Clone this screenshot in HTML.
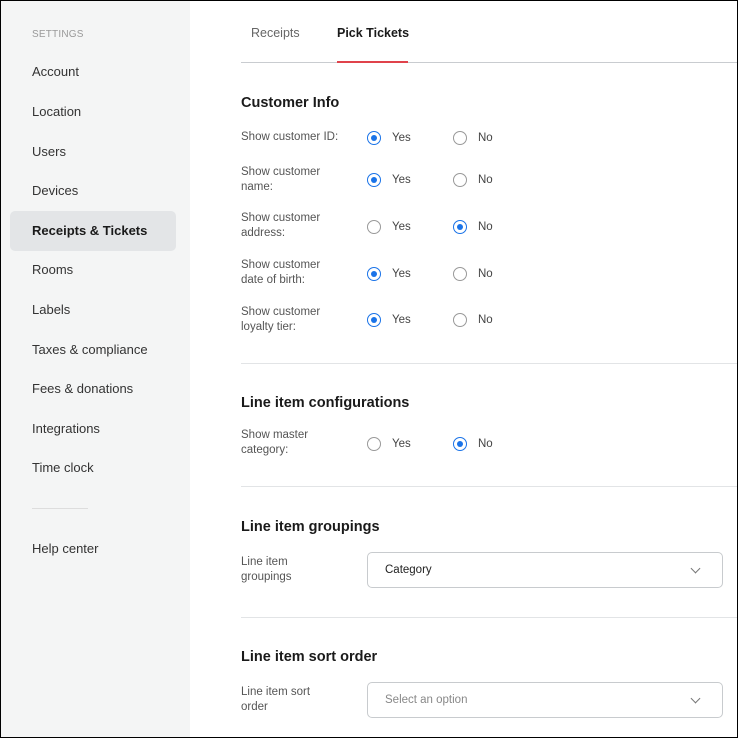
<!DOCTYPE html>
<html><head><style>
*{margin:0;padding:0;box-sizing:border-box}
body{width:738px;height:738px;position:relative;overflow:hidden;font-family:"Liberation Sans",sans-serif;background:#fff;color:#1a1a1a}
.frame{position:absolute;left:0;top:0;width:738px;height:738px;border:1px solid #000;z-index:10;pointer-events:none}
.side{position:absolute;left:0;top:0;width:190px;height:738px;background:#f4f5f5}
.a{position:absolute;white-space:nowrap}
.nav{left:32px;font-size:13px;color:#333;line-height:16px}
.sel{position:absolute;left:10px;top:211px;width:166px;height:40px;background:#e3e5e7;border-radius:5px}
.lbl{left:241px;font-size:11.5px;color:#555;line-height:15px}
.h{left:241px;font-size:14.5px;font-weight:bold;line-height:18px}
.r{position:absolute;width:14px;height:14px;border-radius:50%;border:1px solid #999;background:#fff}
.r.on{border:1.5px solid #1a73e8}
.r.on::after{content:"";position:absolute;left:2.5px;top:2.5px;width:6px;height:6px;border-radius:50%;background:#1a73e8}
.t{font-size:11.5px;color:#444;line-height:14px}
.hr{position:absolute;left:241px;width:496px;height:1px;background:#e2e4e6}
.box{position:absolute;left:367px;width:356px;height:36px;border:1px solid #c8cbce;border-radius:5px;font-size:11.5px;padding:11px 0 0 17px}
.chev{position:absolute;right:23px;top:12px;width:7px;height:7px;border-right:1.2px solid #777;border-bottom:1.2px solid #777;transform:rotate(45deg)}
</style></head><body>
<div class="frame"></div>
<div class="side"></div>
<div class="sel"></div>
<div class="a" style="left:32px;top:29px;font-size:10px;color:#999;letter-spacing:.2px">SETTINGS</div>
<div class="a nav" style="top:64px">Account</div>
<div class="a nav" style="top:104px">Location</div>
<div class="a nav" style="top:144px">Users</div>
<div class="a nav" style="top:183px">Devices</div>
<div class="a nav" style="top:223px;font-weight:bold;color:#1a1a1a">Receipts &amp; Tickets</div>
<div class="a nav" style="top:262px">Rooms</div>
<div class="a nav" style="top:302px">Labels</div>
<div class="a nav" style="top:342px">Taxes &amp; compliance</div>
<div class="a nav" style="top:381px">Fees &amp; donations</div>
<div class="a nav" style="top:421px">Integrations</div>
<div class="a nav" style="top:460px">Time clock</div>
<div style="position:absolute;left:32px;top:508px;width:56px;height:1px;background:#ddd"></div>
<div class="a nav" style="top:541px">Help center</div>

<div class="a" style="left:251px;top:26px;font-size:12.5px;color:#666">Receipts</div>
<div class="a" style="left:337px;top:26px;font-size:12.5px;font-weight:bold">Pick Tickets</div>
<div class="hr" style="top:62px;background:#c9ccd0"></div>
<div style="position:absolute;left:337px;top:61px;width:71px;height:2px;background:#e0434b"></div>

<div class="a h" style="top:94px">Customer Info</div>
<div class="a lbl" style="top:130px">Show customer ID:</div>
<div class="a lbl" style="top:165px">Show customer<br>name:</div>
<div class="a lbl" style="top:211px">Show customer<br>address:</div>
<div class="a lbl" style="top:258px">Show customer<br>date of birth:</div>
<div class="a lbl" style="top:305px">Show customer<br>loyalty tier:</div>

<div class="r on" style="left:367px;top:131px"></div><div class="a t" style="left:392px;top:131px">Yes</div>
<div class="r" style="left:453px;top:131px"></div><div class="a t" style="left:478px;top:131px">No</div>
<div class="r on" style="left:367px;top:173px"></div><div class="a t" style="left:392px;top:173px">Yes</div>
<div class="r" style="left:453px;top:173px"></div><div class="a t" style="left:478px;top:173px">No</div>
<div class="r" style="left:367px;top:220px"></div><div class="a t" style="left:392px;top:220px">Yes</div>
<div class="r on" style="left:453px;top:220px"></div><div class="a t" style="left:478px;top:220px">No</div>
<div class="r on" style="left:367px;top:267px"></div><div class="a t" style="left:392px;top:267px">Yes</div>
<div class="r" style="left:453px;top:267px"></div><div class="a t" style="left:478px;top:267px">No</div>
<div class="r on" style="left:367px;top:313px"></div><div class="a t" style="left:392px;top:313px">Yes</div>
<div class="r" style="left:453px;top:313px"></div><div class="a t" style="left:478px;top:313px">No</div>

<div class="hr" style="top:363px"></div>
<div class="a h" style="top:394px">Line item configurations</div>
<div class="a lbl" style="top:428px">Show master<br>category:</div>
<div class="r" style="left:367px;top:437px"></div><div class="a t" style="left:392px;top:437px">Yes</div>
<div class="r on" style="left:453px;top:437px"></div><div class="a t" style="left:478px;top:437px">No</div>

<div class="hr" style="top:486px"></div>
<div class="a h" style="top:518px">Line item groupings</div>
<div class="a lbl" style="top:555px">Line item<br>groupings</div>
<div class="box" style="top:552px;color:#222">Category<div class="chev"></div></div>

<div class="hr" style="top:617px"></div>
<div class="a h" style="top:648px">Line item sort order</div>
<div class="a lbl" style="top:685px">Line item sort<br>order</div>
<div class="box" style="top:682px;color:#888">Select an option<div class="chev"></div></div>
</body></html>
